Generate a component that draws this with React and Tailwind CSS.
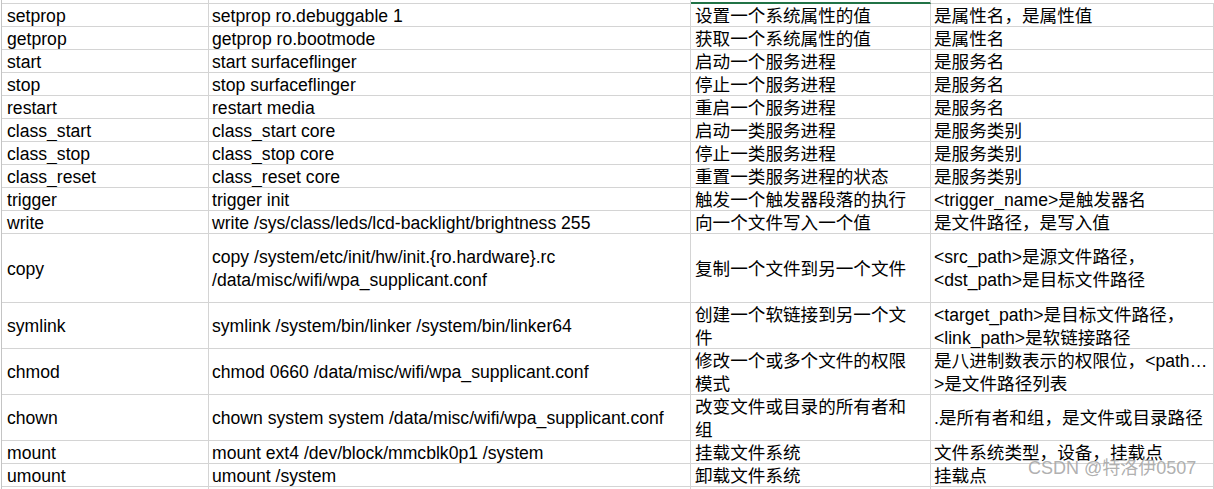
import React from 'react';

const rows = [
    { h: 'h-[23px]', c: ['setprop', 'setprop ro.debuggable 1', '设置一个系统属性的值', '是属性名，是属性值'] },
    { h: 'h-[23px]', c: ['getprop', 'getprop ro.bootmode', '获取一个系统属性的值', '是属性名'] },
    { h: 'h-[23px]', c: ['start', 'start surfaceflinger', '启动一个服务进程', '是服务名'] },
    { h: 'h-[23px]', c: ['stop', 'stop surfaceflinger', '停止一个服务进程', '是服务名'] },
    { h: 'h-[23px]', c: ['restart', 'restart media', '重启一个服务进程', '是服务名'] },
    { h: 'h-[23px]', c: ['class_start', 'class_start core', '启动一类服务进程', '是服务类别'] },
    { h: 'h-[23px]', c: ['class_stop', 'class_stop core', '停止一类服务进程', '是服务类别'] },
    { h: 'h-[23px]', c: ['class_reset', 'class_reset core', '重置一类服务进程的状态', '是服务类别'] },
    { h: 'h-[23px]', c: ['trigger', 'trigger init', '触发一个触发器段落的执行', '<trigger_name>是触发器名'] },
    { h: 'h-[23px]', c: ['write', 'write /sys/class/leds/lcd-backlight/brightness 255', '向一个文件写入一个值', '是文件路径，是写入值'] },
    {
        h: 'h-[69px]',
        c: [
            'copy',
            ['copy /system/etc/init/hw/init.{ro.hardware}.rc', '/data/misc/wifi/wpa_supplicant.conf'],
            '复制一个文件到另一个文件',
            ['<src_path>是源文件路径，', '<dst_path>是目标文件路径'],
        ],
    },
    {
        h: 'h-[46px]',
        c: [
            'symlink',
            'symlink /system/bin/linker /system/bin/linker64',
            ['创建一个软链接到另一个文', '件'],
            ['<target_path>是目标文件路径，', '<link_path>是软链接路径'],
        ],
    },
    {
        h: 'h-[46px]',
        c: [
            'chmod',
            'chmod 0660 /data/misc/wifi/wpa_supplicant.conf',
            ['修改一个或多个文件的权限', '模式'],
            ['是八进制数表示的权限位，<path…', '>是文件路径列表'],
        ],
    },
    {
        h: 'h-[46px]',
        c: [
            'chown',
            'chown system system /data/misc/wifi/wpa_supplicant.conf',
            ['改变文件或目录的所有者和', '组'],
            '.是所有者和组，是文件或目录路径',
        ],
    },
    { h: 'h-[23px]', c: ['mount', 'mount ext4 /dev/block/mmcblk0p1 /system', '挂载文件系统', '文件系统类型，设备，挂载点'] },
    { h: 'h-[23px]', c: ['umount', 'umount /system', '卸载文件系统', '挂载点'] },
    { h: 'h-[23px]', c: ['', '', '', ''] },
];

const pads = ['pl-[5px]', 'pl-[3px]', 'pl-[4px]', 'pl-[3px]'];

function Cell({ value, pad }) {
    const lines = Array.isArray(value) ? value : [value];
    return (
        <div className={`flex items-center pt-[2px] overflow-hidden whitespace-nowrap border-r border-b border-[#d4d4d4] ${pad}`}>
            <div className="flex flex-col leading-[23px]">
                {lines.map((l, i) => (
                    <span key={i}>{l}</span>
                ))}
            </div>
        </div>
    );
}

export default function App() {
    return (
        <div
            className="relative w-[1214px] h-[489px] overflow-hidden bg-white text-black text-[17.6px]"
            style={{ fontFamily: '"Liberation Sans", "Noto Sans CJK SC", sans-serif' }}
        >
            <div className="ml-px border-l border-[#c4c4c4] flex flex-col">
                <div className="grid grid-cols-[207px_482px_240px_1fr] h-[4px]">
                    <div className="border-r border-b border-[#d4d4d4]" />
                    <div className="border-r border-b border-[#d4d4d4]" />
                    <div className="border-r border-b-2 border-b-[#217346] border-r-[#d4d4d4]" />
                    <div className="border-b border-[#d4d4d4]" />
                </div>
                {rows.map((r, i) => (
                    <div key={i} className={`grid grid-cols-[207px_482px_240px_1fr] grid-rows-[minmax(0,1fr)] shrink-0 ${r.h}`}>
                        {r.c.map((v, j) => (
                            <Cell key={j} value={v} pad={pads[j]} />
                        ))}
                    </div>
                ))}
            </div>

            <div className="absolute left-[1028px] top-[457px] text-[18px] leading-[23px] text-[#a6a6a6]/90 whitespace-nowrap">
                CSDN @特洛伊0507
            </div>
        </div>
    );
}
